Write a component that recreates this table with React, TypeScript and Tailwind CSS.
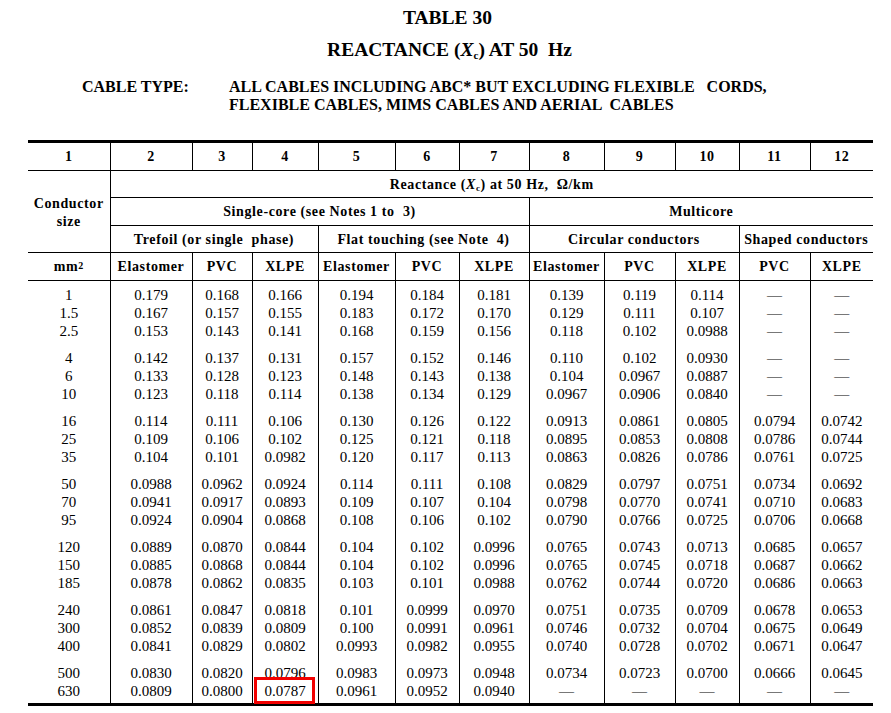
import React from 'react';

const cols = [82, 82, 60, 66, 77, 64, 70, 75, 71, 64, 71, 63];

const D = '—';

const groups: string[][][] = [
  [
    ['1', '0.179', '0.168', '0.166', '0.194', '0.184', '0.181', '0.139', '0.119', '0.114', D, D],
    ['1.5', '0.167', '0.157', '0.155', '0.183', '0.172', '0.170', '0.129', '0.111', '0.107', D, D],
    ['2.5', '0.153', '0.143', '0.141', '0.168', '0.159', '0.156', '0.118', '0.102', '0.0988', D, D],
  ],
  [
    ['4', '0.142', '0.137', '0.131', '0.157', '0.152', '0.146', '0.110', '0.102', '0.0930', D, D],
    ['6', '0.133', '0.128', '0.123', '0.148', '0.143', '0.138', '0.104', '0.0967', '0.0887', D, D],
    ['10', '0.123', '0.118', '0.114', '0.138', '0.134', '0.129', '0.0967', '0.0906', '0.0840', D, D],
  ],
  [
    ['16', '0.114', '0.111', '0.106', '0.130', '0.126', '0.122', '0.0913', '0.0861', '0.0805', '0.0794', '0.0742'],
    ['25', '0.109', '0.106', '0.102', '0.125', '0.121', '0.118', '0.0895', '0.0853', '0.0808', '0.0786', '0.0744'],
    ['35', '0.104', '0.101', '0.0982', '0.120', '0.117', '0.113', '0.0863', '0.0826', '0.0786', '0.0761', '0.0725'],
  ],
  [
    ['50', '0.0988', '0.0962', '0.0924', '0.114', '0.111', '0.108', '0.0829', '0.0797', '0.0751', '0.0734', '0.0692'],
    ['70', '0.0941', '0.0917', '0.0893', '0.109', '0.107', '0.104', '0.0798', '0.0770', '0.0741', '0.0710', '0.0683'],
    ['95', '0.0924', '0.0904', '0.0868', '0.108', '0.106', '0.102', '0.0790', '0.0766', '0.0725', '0.0706', '0.0668'],
  ],
  [
    ['120', '0.0889', '0.0870', '0.0844', '0.104', '0.102', '0.0996', '0.0765', '0.0743', '0.0713', '0.0685', '0.0657'],
    ['150', '0.0885', '0.0868', '0.0844', '0.104', '0.102', '0.0996', '0.0765', '0.0745', '0.0718', '0.0687', '0.0662'],
    ['185', '0.0878', '0.0862', '0.0835', '0.103', '0.101', '0.0988', '0.0762', '0.0744', '0.0720', '0.0686', '0.0663'],
  ],
  [
    ['240', '0.0861', '0.0847', '0.0818', '0.101', '0.0999', '0.0970', '0.0751', '0.0735', '0.0709', '0.0678', '0.0653'],
    ['300', '0.0852', '0.0839', '0.0809', '0.100', '0.0991', '0.0961', '0.0746', '0.0732', '0.0704', '0.0675', '0.0649'],
    ['400', '0.0841', '0.0829', '0.0802', '0.0993', '0.0982', '0.0955', '0.0740', '0.0728', '0.0702', '0.0671', '0.0647'],
  ],
  [
    ['500', '0.0830', '0.0820', '0.0796', '0.0983', '0.0973', '0.0948', '0.0734', '0.0723', '0.0700', '0.0666', '0.0645'],
    ['630', '0.0809', '0.0800', '0.0787', '0.0961', '0.0952', '0.0940', D, D, D, D, D],
  ],
];

const materials = ['Elastomer', 'PVC', 'XLPE', 'Elastomer', 'PVC', 'XLPE', 'Elastomer', 'PVC', 'XLPE', 'PVC', 'XLPE'];

const th = 'border border-black font-bold text-[14px] tracking-[0.6px] text-center align-middle px-0 whitespace-pre';

const App = () => {
  return (
    <div className="w-[891px] h-[713px] bg-white text-black overflow-hidden" style={{ fontFamily: '"Liberation Serif", "Times New Roman", serif' }}>
      {/* title */}
      <div className="pt-[6px] pl-[4px] text-center font-bold text-[19.5px] leading-[24px]">TABLE 30</div>
      <div className="mt-[8px] pl-[8px] text-center font-bold text-[19.5px] leading-[24px] whitespace-pre">
        REACTANCE (<span className="italic">X</span>
        <sub className="text-[11px] align-baseline relative top-[3px]">c</sub>) AT 50  Hz
      </div>

      <div className="mt-[16px] flex pl-[82px] font-bold text-[16px] leading-[18px]">
        <div className="w-[147px] shrink-0">CABLE TYPE:</div>
        <div className="whitespace-pre">
          <div>ALL CABLES INCLUDING ABC* BUT EXCLUDING FLEXIBLE   CORDS,</div>
          <div>FLEXIBLE CABLES, MIMS CABLES AND AERIAL  CABLES</div>
        </div>
      </div>

      <table className="ml-[28px] mt-[26px] w-[845px] table-fixed border-collapse">
        <colgroup>
          {cols.map((w, i) => (
            <col key={i} style={{ width: w }} />
          ))}
        </colgroup>
        <thead>
          <tr className="h-[29px]">
            {cols.map((_, i) => (
              <th key={i} className={`${th} border-t-[3px] ${i === 0 ? 'border-l-0' : ''} ${i === 11 ? 'border-r-0' : ''}`}>
                {i + 1}
              </th>
            ))}
          </tr>
          <tr className="h-[27px]">
            <th rowSpan={3} className={`${th} border-l-0 leading-[18px] pt-[2px]`}>
              Conductor
              <br />
              size
            </th>
            <th colSpan={11} className={`${th} border-r-0`}>
              Reactance (<span className="italic">X</span>
              <sub className="text-[9px] align-baseline relative top-[2px]">c</sub>) at 50 Hz,  Ω/km
            </th>
          </tr>
          <tr className="h-[28px]">
            <th colSpan={6} className={th}>Single-core (see Notes 1 to  3)</th>
            <th colSpan={5} className={`${th} border-r-0`}>Multicore</th>
          </tr>
          <tr className="h-[27px]">
            <th colSpan={3} className={th}>Trefoil (or single  phase)</th>
            <th colSpan={3} className={th}>Flat touching (see Note  4)</th>
            <th colSpan={3} className={th}>Circular conductors</th>
            <th colSpan={2} className={`${th} border-r-0`}>Shaped conductors</th>
          </tr>
          <tr className="h-[28px]">
            <th className={`${th} border-l-0`}>
              mm<sup className="text-[10px] relative -top-[2px]">2</sup>
            </th>
            {materials.map((m, i) => (
              <th key={i} className={`${th} ${i === 10 ? 'border-r-0' : ''}`}>
                {m}
              </th>
            ))}
          </tr>
        </thead>
        <tbody className="text-[15px]">
          {groups.map((g, gi) =>
            g.map((row, ri) => {
              const first = ri === 0;
              const last = gi === groups.length - 1 && ri === g.length - 1;
              const pad = first ? (gi === 0 ? 'pt-[5px]' : 'pt-[9px]') : 'pt-0';
              return (
                <tr key={`${gi}-${ri}`}>
                  {row.map((v, ci) => (
                    <td
                      key={ci}
                      className={`p-0 ${pad} ${last ? 'pb-[3px] border-b-[3px]' : ''} border-black text-center leading-[18px] ${
                        ci > 0 ? 'border-l' : ''
                      }`}
                    >
                      {last && ci === 3 ? (
                        <div className="relative">
                          {v}
                          <span className="absolute -top-[5px] -bottom-[4px] left-[1px] right-[3px] border-[3px] border-[#f20000]" />
                        </div>
                      ) : (
                        v
                      )}
                    </td>
                  ))}
                </tr>
              );
            })
          )}
        </tbody>
      </table>
    </div>
  );
};

export default App;
